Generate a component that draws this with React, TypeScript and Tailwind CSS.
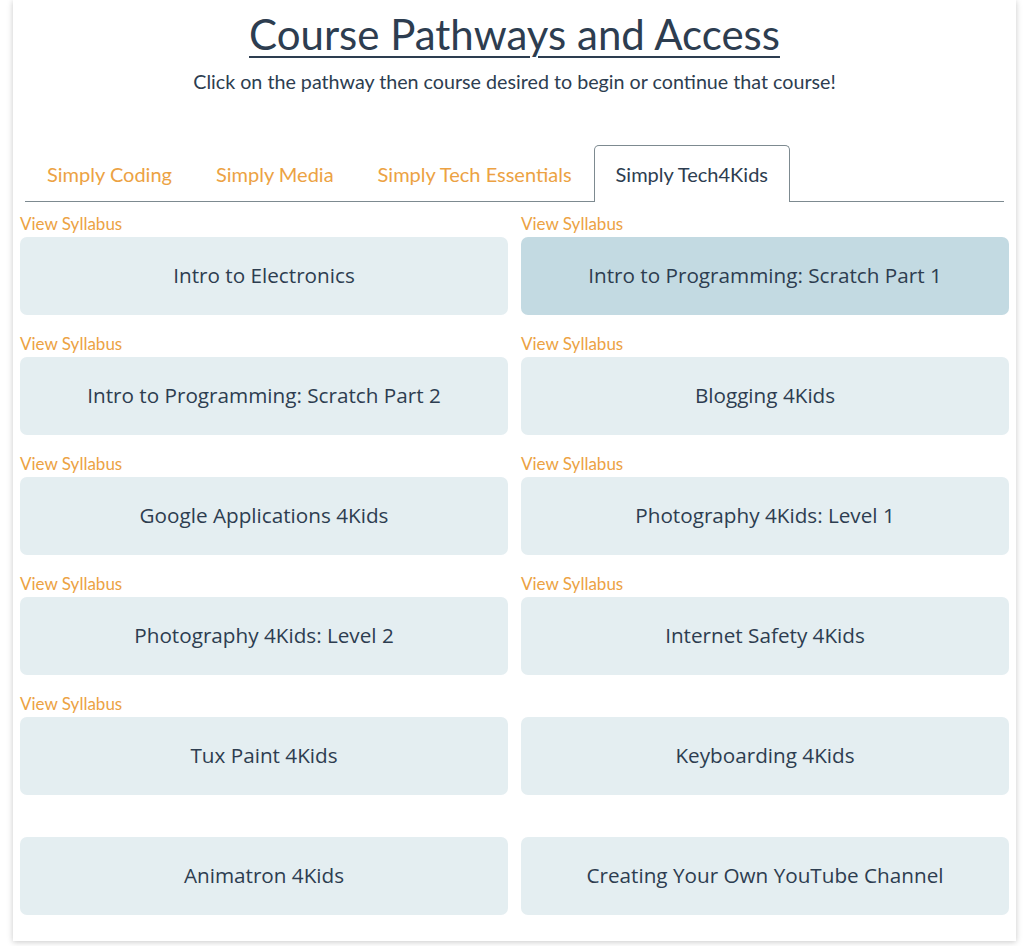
import React from 'react';

const tabs = ['Simply Coding', 'Simply Media', 'Simply Tech Essentials', 'Simply Tech4Kids'];

const courses = [
  { name: 'Intro to Electronics', syllabus: true },
  { name: 'Intro to Programming: Scratch Part 1', syllabus: true, active: true },
  { name: 'Intro to Programming: Scratch Part 2', syllabus: true },
  { name: 'Blogging 4Kids', syllabus: true },
  { name: 'Google Applications 4Kids', syllabus: true },
  { name: 'Photography 4Kids: Level 1', syllabus: true },
  { name: 'Photography 4Kids: Level 2', syllabus: true },
  { name: 'Internet Safety 4Kids', syllabus: true },
  { name: 'Tux Paint 4Kids', syllabus: true },
  { name: 'Keyboarding 4Kids', syllabus: false },
  { name: 'Animatron 4Kids', syllabus: false },
  { name: 'Creating Your Own YouTube Channel', syllabus: false },
];

export default function App() {
  const activeTab = 'Simply Tech4Kids';

  return (
    <div className="min-h-[946px] bg-white pb-[6px]" style={{ fontFamily: 'Lato, "Liberation Sans", sans-serif' }}>
      <div className="ml-[13px] w-[1003px] bg-white px-[7px] pb-[26px] shadow-[0_1px_6px_rgba(0,0,0,0.22)]">
        {/* header */}
        <div className="pt-[8px] text-center text-[#2d3d50]">
          <h1 className="text-[42px] leading-[52px] underline decoration-[2px] underline-offset-[6px]">
            Course Pathways and Access
          </h1>
          <p className="mt-[10px] text-[19.7px] leading-[24px]">
            Click on the pathway then course desired to begin or continue that course!
          </p>
        </div>

        {/* pathway tabs */}
        <div className="mx-[5px] mt-[51px] flex border-b border-[#7d8a90]">
          {tabs.map((tab) => (
            <div
              key={tab}
              className={
                tab === activeTab
                  ? '-mb-px h-[57px] rounded-t-[5px] border border-b-0 border-[#7d8a90] bg-white px-[21px] text-[20px] leading-[56px] text-[#2d3d50]'
                  : 'h-[56px] border border-transparent px-[21px] text-[20px] leading-[56px] text-[#eca243]'
              }
            >
              {tab}
            </div>
          ))}
        </div>

        {/* course grid */}
        <div className="mt-[11px] grid grid-cols-2 gap-x-[13px] gap-y-[18px]">
          {courses.map((c) => (
            <div key={c.name}>
              <div className="h-[22px] text-[17px] leading-[22px] text-[#eca243]">
                {c.syllabus ? 'View Syllabus' : ''}
              </div>
              <button
                className={`mt-[2px] flex h-[78px] w-full items-center justify-center rounded-[7px] text-[20.7px] text-[#2d3d50] ${
                  c.active ? 'bg-[#c3dae2]' : 'bg-[#e4eef1]'
                }`}
                style={{ fontFamily: '"Open Sans", "Liberation Sans", sans-serif' }}
              >
                {c.name}
              </button>
            </div>
          ))}
        </div>
      </div>
    </div>
  );
}
